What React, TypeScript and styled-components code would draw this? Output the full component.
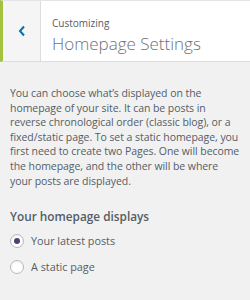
import React from "react";
import styled, { createGlobalStyle } from "styled-components";

const GlobalStyle = createGlobalStyle`
  html, body {
    margin: 0;
    padding: 0;
    background: #f1f1f1;
  }
  body {
    font-family: "Open Sans", "Noto Sans", Arial, sans-serif;
    color: #555d66;
  }
`;

const Panel = styled.div`
  width: 250px;
  height: 300px;
  background: #f1f1f1;
  overflow: hidden;
`;

const Header = styled.header`
  display: flex;
  height: 62px;
  border-top: 1px solid #e2e4e7;
  border-bottom: 1px solid #dddddd;
  border-left: 3px solid #a3c23e;
  box-sizing: border-box;
  background: #fff;
`;

const BackButton = styled.button`
  width: 38px;
  flex: none;
  border: 0;
  border-right: 1px solid #dddddd;
  background: #f5f5f5;
  display: flex;
  align-items: center;
  justify-content: center;
  padding: 0;
  color: #0073aa;
`;

const Titles = styled.div`
  padding: 15px 0 0 11px;
  display: flex;
  flex-direction: column;
`;

const Crumb = styled.span`
  font-size: 10px;
  line-height: 14px;
  color: #555d66;
`;

const Title = styled.h2`
  margin: 3px 0 0;
  font-size: 17px;
  line-height: 22px;
  font-weight: 300;
  color: #6b7279;
`;

const Body = styled.section`
  padding: 24px 6px 0 10px;
`;

const Description = styled.p`
  margin: 0;
  font-size: 10.5px;
  line-height: 14.6px;
  letter-spacing: -0.06px;
  color: #555d66;
`;

const Line = styled.span`
  display: block;
  white-space: nowrap;
`;

const Label = styled.h3`
  margin: 20px 0 0;
  font-size: 11.8px;
  line-height: 16px;
  font-weight: 600;
  color: #555d66;
`;

const Options = styled.div`
  margin-top: 10px;
  display: flex;
  flex-direction: column;
  gap: 12px;
`;

const Option = styled.label`
  display: flex;
  align-items: center;
  gap: 7px;
  font-size: 10.8px;
  line-height: 14px;
  color: #555d66;
`;

const Radio = styled.span<{ $checked?: boolean }>`
  width: 12px;
  height: 12px;
  border-radius: 50%;
  border: 1px solid #b4b9be;
  background: #fff;
  box-shadow: inset 0 1px 2px rgba(0, 0, 0, 0.07);
  display: flex;
  align-items: center;
  justify-content: center;
  flex: none;
  &::after {
    content: "";
    width: 6px;
    height: 6px;
    border-radius: 50%;
    background: #523f6d;
    display: ${(p) => (p.$checked ? "block" : "none")};
  }
`;

const description = [
  "You can choose what\u2019s displayed on the",
  "homepage of your site. It can be posts in",
  "reverse chronological order (classic blog), or a",
  "fixed/static page. To set a static homepage, you",
  "first need to create two Pages. One will become",
  "the homepage, and the other will be where",
  "your posts are displayed.",
];

export default function App() {
  return (
    <Panel>
      <GlobalStyle />
      <Header>
        <BackButton aria-label="Back">
          <svg width="8" height="12" viewBox="0 0 8 12">
            <path d="M6 1.5L2 6l4 4.5" fill="none" stroke="#0073aa" strokeWidth="2" />
          </svg>
        </BackButton>
        <Titles>
          <Crumb>Customizing</Crumb>
          <Title>Homepage Settings</Title>
        </Titles>
      </Header>
      <Body>
        <Description>
          {description.map((l) => (
            <Line key={l}>{l}</Line>
          ))}
        </Description>
        <Label>Your homepage displays</Label>
        <Options>
          <Option>
            <Radio $checked />
            Your latest posts
          </Option>
          <Option>
            <Radio />
            A static page
          </Option>
        </Options>
      </Body>
    </Panel>
  );
}
